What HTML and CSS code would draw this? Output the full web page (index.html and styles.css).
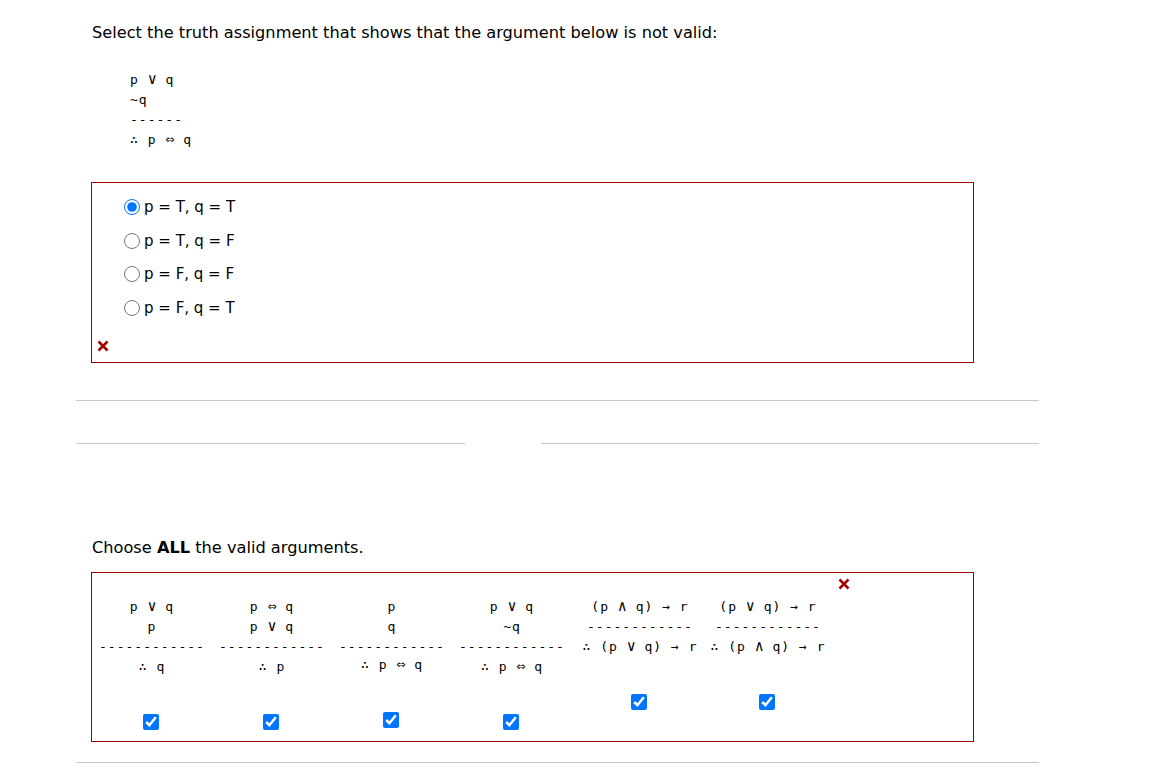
FILE: index.html
```html
<!DOCTYPE html>
<html lang="en">
<head>
<meta charset="utf-8">
<title>Arguments quiz</title>
<link rel="stylesheet" href="styles.css">
</head>
<body>
<div class="page">
  <section class="question q1">
    <p class="prompt">Select the truth assignment that shows that the argument below is not valid:</p>
    <div class="argument">
      <div class="ln">p <span class="op">∨</span> q</div>
      <div class="ln">~q</div>
      <div class="ln">------</div>
      <div class="ln">∴ p <span class="op">⇔</span> q</div>
    </div>
    <div class="answer-box radio-box">
      <label class="option"><input type="radio" name="assign" checked><span>p = T, q = T</span></label>
      <label class="option"><input type="radio" name="assign"><span>p = T, q = F</span></label>
      <label class="option"><input type="radio" name="assign"><span>p = F, q = F</span></label>
      <label class="option"><input type="radio" name="assign"><span>p = F, q = T</span></label>
      <span class="mark mark-bottom"><svg viewBox="0 0 12 12" width="12" height="12"><path d="M1.5 1.5 L10.5 10.5 M10.5 1.5 L1.5 10.5" stroke="#a00000" stroke-width="2.6" fill="none"/></svg></span>
    </div>
  </section>

  <hr class="rule rule-first">
  <div class="split">
    <hr class="rule rule-left">
    <hr class="rule rule-right">
  </div>

  <section class="question q2">
    <p class="prompt">Choose <b>ALL</b> the valid arguments.</p>
    <div class="answer-box args-box">
      <div class="arg-col">
        <div class="lines">
          <div class="ln">p <span class="op">∨</span> q</div>
          <div class="ln">p</div>
          <div class="ln">------------</div>
          <div class="ln">∴ q</div>
        </div>
        <input type="checkbox" checked>
      </div>
      <div class="arg-col">
        <div class="lines">
          <div class="ln">p <span class="op">⇔</span> q</div>
          <div class="ln">p <span class="op">∨</span> q</div>
          <div class="ln">------------</div>
          <div class="ln">∴ p</div>
        </div>
        <input type="checkbox" checked>
      </div>
      <div class="arg-col">
        <div class="lines">
          <div class="ln">p</div>
          <div class="ln">q</div>
          <div class="ln tight">------------</div>
          <div class="ln">∴ p <span class="op">⇔</span> q</div>
        </div>
        <input type="checkbox" checked>
      </div>
      <div class="arg-col">
        <div class="lines">
          <div class="ln">p <span class="op">∨</span> q</div>
          <div class="ln">~q</div>
          <div class="ln">------------</div>
          <div class="ln">∴ p <span class="op">⇔</span> q</div>
        </div>
        <input type="checkbox" checked>
      </div>
      <div class="arg-col wide">
        <div class="lines">
          <div class="ln">(p <span class="op">∧</span> q) → r</div>
          <div class="ln">------------</div>
          <div class="ln">∴ (p <span class="op">∨</span> q) → r</div>
        </div>
        <input type="checkbox" checked>
      </div>
      <div class="arg-col">
        <div class="lines">
          <div class="ln">(p <span class="op">∨</span> q) → r</div>
          <div class="ln">------------</div>
          <div class="ln">∴ (p <span class="op">∧</span> q) → r</div>
        </div>
        <input type="checkbox" checked>
      </div>
      <span class="mark mark-top"><svg viewBox="0 0 12 12" width="12" height="12"><path d="M1.5 1.5 L10.5 10.5 M10.5 1.5 L1.5 10.5" stroke="#a00000" stroke-width="2.6" fill="none"/></svg></span>
    </div>
  </section>

  <hr class="rule rule-last">
</div>
</body>
</html>
```

FILE: styles.css
```css
html, body {
  margin: 0;
  padding: 0;
  background: #ffffff;
}

body {
  font-family: "DejaVu Sans", sans-serif;
  font-size: 16px;
  color: #000;
}

.page {
  width: 963px;
  margin-left: 76px;
  padding-top: 23px;
}

.prompt {
  margin: 0;
  padding-left: 16px;
  line-height: 20px;
  font-size: 16.2px;
}

.argument,
.lines {
  font-family: "DejaVu Sans Mono", monospace;
  font-size: 13px;
  letter-spacing: 1px;
  line-height: 20px;
}

.ln {
  white-space: pre;
  height: 20px;
}

.op {
  font-size: 15px;
  letter-spacing: 0;
  line-height: 1;
}

.argument {
  margin: 27px 0 0 54px;
}

.answer-box {
  margin-left: 15px;
  width: 883px;
  border: 1px solid #a00000;
}

.radio-box {
  margin-top: 32px;
  padding: 7px 0 0 32px;
  box-sizing: border-box;
  height: 181px;
  display: flex;
  flex-direction: column;
}

.option {
  display: flex;
  align-items: center;
  height: 33.7px;
  line-height: 20px;
  font-size: 15px;
}

.option input {
  width: 16px;
  height: 16px;
  margin: 0 4px 0 0;
}

.mark {
  display: block;
  width: 12px;
  height: 12px;
}

.mark svg {
  display: block;
}

.mark-bottom {
  margin: 15px 0 0 -27px;
}

.rule {
  border: 0;
  height: 1px;
  background: #c8c8c8;
  margin: 0;
}

.rule-first {
  margin-top: 37px;
}

.split {
  display: flex;
  justify-content: space-between;
  margin-top: 42px;
}

.rule-left {
  width: 389px;
}

.rule-right {
  width: 498px;
}

.q2 .prompt {
  margin-top: 94px;
}

.args-box {
  margin-top: 14px;
  height: 170px;
  box-sizing: border-box;
  padding-top: 24px;
  display: flex;
  align-items: flex-start;
}

.arg-col {
  width: 120px;
  display: flex;
  flex-direction: column;
  align-items: center;
}

.arg-col.wide {
  width: 136px;
}

.lines {
  text-align: center;
}

.lines .tight {
  height: 18px;
}

.arg-col input {
  width: 16px;
  height: 16px;
  margin: 37px 0 0 -3px;
}

.mark-top {
  margin: -19px 0 0 10px;
}

.rule-last {
  margin-top: 20px;
}
```
